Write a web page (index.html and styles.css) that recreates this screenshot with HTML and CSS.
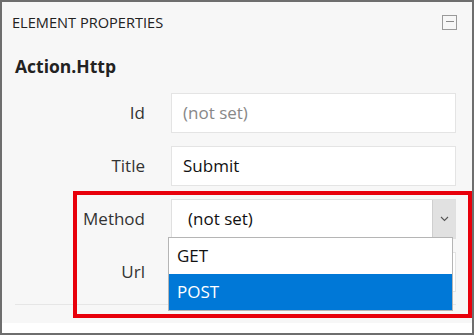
FILE: index.html
```html
<!DOCTYPE html>
<html lang="en">
<head>
    <meta charset="UTF-8">
    <meta name="viewport" content="width=device-width, initial-scale=1.0">
    <title>Element Properties</title>
    <link rel="stylesheet" href="styles.css">
</head>
<body>

<div class="panel">
    <div class="panel-inner">
        <div class="header">
            <span class="header-title">ELEMENT PROPERTIES</span>
            <span class="collapse-btn"></span>
        </div>

        <h2 class="element-name">Action.Http</h2>

        <div class="props">
            <label class="prop-label">Id</label>
            <div class="field placeholder">(not set)</div>

            <label class="prop-label">Title</label>
            <div class="field">Submit</div>

            <label class="prop-label">Method</label>
            <div class="field select">
                <span class="select-value">(not set)</span>
                <span class="select-btn">
                    <svg width="9" height="6" viewBox="0 0 9 6"><path d="M1 1 L4.5 4.5 L8 1" fill="none" stroke="#555" stroke-width="1.1"/></svg>
                </span>
                <ul class="dropdown">
                    <li>GET</li>
                    <li class="selected">POST</li>
                </ul>
            </div>

            <label class="prop-label">Url</label>
            <div class="field"></div>
        </div>

        <div class="divider"></div>
    </div>

    <div class="highlight"></div>
</div>

</body>
</html>
```

FILE: styles.css
```css
* {
    box-sizing: border-box;
    margin: 0;
    padding: 0;
}

body {
    font-family: "Open Sans", "Noto Sans", sans-serif;
    color: #222;
    background: #fff;
}

.panel {
    position: relative;
    width: 474px;
    height: 335px;
    border: 2px solid #6e6e6e;
    background: #fff;
    overflow: hidden;
}

.panel-inner {
    height: 321px;
    background: #f7f7f7;
}

.header {
    display: flex;
    justify-content: space-between;
    align-items: center;
    height: 40px;
    padding: 0 15px 0 10px;
}

.header-title {
    font-size: 14.6px;
    color: #222;
}

.collapse-btn {
    position: relative;
    width: 15px;
    height: 15px;
    border: 1.5px solid #9a9a9a;
}

.collapse-btn::after {
    content: "";
    position: absolute;
    left: 2.5px;
    right: 2.5px;
    top: 5px;
    height: 1.5px;
    background: #8a8a8a;
}

.element-name {
    font-size: 17.5px;
    font-weight: 700;
    padding: 12px 0 0 13px;
    height: 51px;
    color: #222;
}

.props {
    display: grid;
    grid-template-columns: 143px 1fr;
    column-gap: 26px;
    row-gap: 13px;
    padding-right: 16px;
}

.prop-label {
    font-size: 17px;
    color: #333;
    text-align: right;
    line-height: 40px;
}

.field {
    position: relative;
    height: 40px;
    background: #fff;
    border: 1px solid #e4e4e4;
    padding: 0 11px;
    font-size: 17px;
    line-height: 38px;
    color: #111;
}

.placeholder {
    color: #888;
}

.select {
    display: flex;
    padding-right: 0;
    border-color: #e0e0e0;
}

.select-value {
    flex: 1;
    padding-left: 5px;
    color: #111;
}

.select-btn {
    width: 23px;
    height: 38px;
    background: #e1e1e1;
    border-left: 1px solid #cfcfcf;
    display: flex;
    align-items: center;
    justify-content: center;
}

.dropdown {
    position: absolute;
    left: -4px;
    top: 37px;
    width: 285px;
    list-style: none;
    background: #fff;
    border: 1px solid #b5b5b5;
    z-index: 2;
}

.dropdown li {
    height: 36px;
    line-height: 36px;
    padding-left: 8px;
    font-size: 17px;
    color: #111;
}

.dropdown li.selected {
    background: #0078d7;
    color: #fff;
}

.divider {
    height: 1px;
    margin: 12px 16px 0 13px;
    background: #e6e6e6;
}

.highlight {
    position: absolute;
    left: 71px;
    top: 189px;
    width: 399px;
    height: 127px;
    border: 4.5px solid #e8000b;
    z-index: 3;
}
```
